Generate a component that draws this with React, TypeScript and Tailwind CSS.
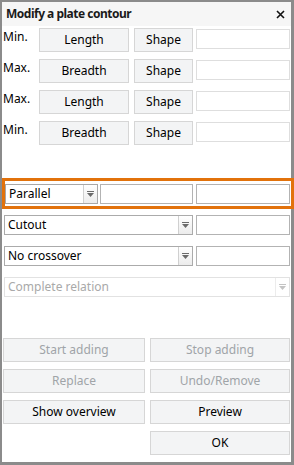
import React from 'react';

const font = { fontFamily: '"Noto Sans", "DejaVu Sans", sans-serif' };

function Arrow({ disabled }: { disabled?: boolean }) {
  return (
    <svg width="7" height="6" viewBox="0 0 7 6" className={disabled ? 'text-[#c4c4c4]' : 'text-[#6b6b6b]'}>
      <rect x="0" y="0" width="7" height="1" fill="currentColor" />
      <path d="M0 2h7L3.5 6z" fill="currentColor" />
    </svg>
  );
}

function Select({ label, width, disabled, dark }: { label: string; width: string; disabled?: boolean; dark?: boolean }) {
  return (
    <div
      className={`${width} h-[20px] flex items-stretch border bg-white ${
        disabled ? 'border-[#e2e2e2]' : dark ? 'border-[#a8a8a8]' : 'border-[#ababab]'
      }`}
    >
      <span className={`flex-1 pl-[3px] text-[12px] leading-[18px] ${disabled ? 'text-[#a9a9a9]' : 'text-black'}`}>
        {label}
      </span>
      <span
        className={`w-[14px] flex items-center justify-center border-l bg-gradient-to-b from-white to-[#ececec] ${
          disabled ? 'border-[#ececec] from-white to-white' : 'border-[#d0d0d0]'
        }`}
      >
        <Arrow disabled={disabled} />
      </span>
    </div>
  );
}

function Btn({ label, width, disabled }: { label: string; width: string; disabled?: boolean }) {
  return (
    <button
      className={`${width} h-[24px] border border-[#d6d6d6] bg-[#f3f4f5] text-[12px] leading-[22px] ${
        disabled ? 'text-[#a0a4a8]' : 'text-black'
      }`}
    >
      {label}
    </button>
  );
}

const rows = [
  ['Min.', 'Length'],
  ['Max.', 'Breadth'],
  ['Max.', 'Length'],
  ['Min.', 'Breadth'],
];

export default function App() {
  return (
    <div style={font} className="w-[294px] h-[465px] bg-white border-l-2 border-t-2 border-r-[3px] border-b-[3px] border-[#8b8b8b] flex flex-col">
      <div className="h-[24px] bg-[#f6f6f6] flex items-center justify-between pl-[4px] pr-[6px]">
        <span className="text-[12px] font-bold text-[#1a1a1a] tracking-[-0.5px]">Modify a plate contour</span>
        <svg width="9" height="9" viewBox="0 0 9 9" className="mt-[1px]">
          <path d="M1 1l7 7M8 1l-7 7" stroke="#111" strokeWidth="1.6" />
        </svg>
      </div>

      <div className="flex flex-col gap-[7px] mt-[2px]">
        {rows.map(([lim, dim], i) => (
          <div key={i} className="flex items-start h-[24px]">
            <span className="w-[37px] pl-[1px] text-[12px] leading-[16px] mt-[1px] text-black">{lim}</span>
            <Btn label={dim} width="w-[90px]" />
            <div className="w-[5px]" />
            <Btn label="Shape" width="w-[59px]" />
            <div className="w-[3px]" />
            <div className="w-[94px] h-[20px] mt-[1px] border border-[#dedede] bg-white" />
          </div>
        ))}
      </div>

      <div className="mt-[33px] mr-[-3px] h-[31px] border-[3px] border-[#e2720b] flex items-start pt-[3px]">
        <Select label="Parallel" width="w-[93px]" dark />
        <div className="w-[2px]" />
        <div className="w-[93px] h-[20px] border border-[#b3b3b3] bg-white" />
        <div className="w-[3px]" />
        <div className="w-[94px] h-[20px] border border-[#b3b3b3] bg-white" />
      </div>

      <div className="mt-[6px] flex pl-[2px]">
        <Select label="Cutout" width="w-[189px]" />
        <div className="w-[3px]" />
        <div className="w-[94px] h-[20px] border border-[#b3b3b3] bg-white" />
      </div>

      <div className="mt-[11px] flex pl-[2px]">
        <Select label="No crossover" width="w-[189px]" />
        <div className="w-[3px]" />
        <div className="w-[94px] h-[20px] border border-[#b3b3b3] bg-white" />
      </div>

      <div className="mt-[11px] flex pl-[2px]">
        <Select label="Complete relation" width="w-[286px]" disabled />
      </div>

      <div className="mt-[41px] flex flex-col gap-[7px] pl-[1px]">
        <div className="flex gap-[5px]">
          <Btn label="Start adding" width="w-[142px]" disabled />
          <Btn label="Stop adding" width="w-[140px]" disabled />
        </div>
        <div className="flex gap-[5px]">
          <Btn label="Replace" width="w-[142px]" disabled />
          <Btn label="Undo/Remove" width="w-[140px]" disabled />
        </div>
        <div className="flex gap-[5px]">
          <Btn label="Show overview" width="w-[142px]" />
          <Btn label="Preview" width="w-[140px]" />
        </div>
        <div className="flex gap-[5px]">
          <div className="w-[142px]" />
          <Btn label="OK" width="w-[140px]" />
        </div>
      </div>
    </div>
  );
}
